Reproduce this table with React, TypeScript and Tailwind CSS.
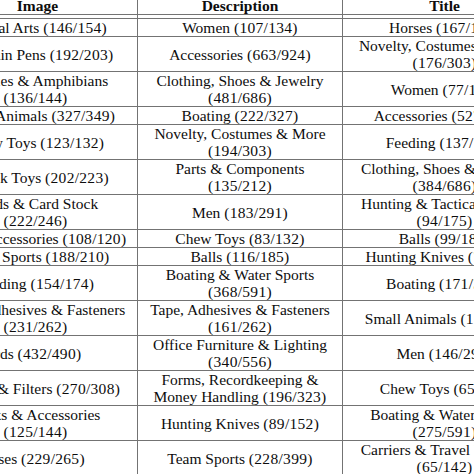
const rows: string[][] = [
  ["Martial Arts (146/154)", "Women (107/134)", "Horses (167/185)"],
  ["Fountain Pens (192/203)", "Accessories (663/924)", "Novelty, Costumes & More\n(176/303)"],
  ["Reptiles & Amphibians\n(136/144)", "Clothing, Shoes & Jewelry\n(481/686)", "Women (77/134)"],
  ["Small Animals (327/349)", "Boating (222/327)", "Accessories (527/924)"],
  ["Chew Toys (123/132)", "Novelty, Costumes & More\n(194/303)", "Feeding (137/174)"],
  ["Squeak Toys (202/223)", "Parts & Components\n(135/212)", "Clothing, Shoes & Jewelry\n(384/686)"],
  ["Cards & Card Stock\n(222/246)", "Men (183/291)", "Hunting & Tactical Knives\n(94/175)"],
  ["Horse Accessories (108/120)", "Chew Toys (83/132)", "Balls (99/185)"],
  ["Water Sports (188/210)", "Balls (116/185)", "Hunting Knives (78/152)"],
  ["Feeding (154/174)", "Boating & Water Sports\n(368/591)", "Boating (171/327)"],
  ["Tape, Adhesives & Fasteners\n(231/262)", "Tape, Adhesives & Fasteners\n(161/262)", "Small Animals (169/349)"],
  ["Cards (432/490)", "Office Furniture & Lighting\n(340/556)", "Men (146/291)"],
  ["Pumps & Filters (270/308)", "Forms, Recordkeeping &\nMoney Handling (196/323)", "Chew Toys (65/132)"],
  ["Tanks & Accessories\n(125/144)", "Hunting Knives (89/152)", "Boating & Water Sports\n(275/591)"],
  ["Horses (229/265)", "Team Sports (228/399)", "Carriers & Travel Products\n(65/142)"],
];

const pad = ["px-[8px]", "px-[8px]", "px-[8px]"];
// these two first-column cells sit a little left of the others in the source
const shifted = new Set([11, 14]);

// numbers in the source are set in math mode, a bit wider than the text face
function Line({ text }: { text: string }) {
  const parts = text.split(/(\(\d+\/\d+\))/);
  return (
    <div className="whitespace-nowrap">
      {parts.map((p, i) =>
        /^\(\d+\/\d+\)$/.test(p) ? (
          <span key={i} className="tracking-[0.3px]">{p}</span>
        ) : (
          <span key={i}>{p}</span>
        )
      )}
    </div>
  );
}

export default function App() {
  return (
    <div className="w-[474px] h-[474px] overflow-hidden bg-white text-[#0d0d0d] font-['Liberation_Serif',serif] text-[15.5px]">
      <div className="-ml-[66px] w-[613px]">
        {/* header */}
        <div className="grid grid-cols-[204px_205px_204px] h-[15px] border-b border-[#737373]">
          {["Image", "Description", "Title"].map((h, i) => (
            <div key={h} className={`border-r border-[#737373] text-center font-bold leading-[12px] ${i === 0 ? "pl-[10px] pr-[6px]" : pad[i]}`}>
              {h}
            </div>
          ))}
        </div>
        <div className="grid grid-cols-[204px_205px_204px] h-[4px] border-b border-[#737373]">
          <div className="border-r border-[#737373]" />
          <div className="border-r border-[#737373]" />
          <div className="border-r border-[#737373]" />
        </div>

        {rows.map((row, r) => (
          <div key={r} className="grid grid-cols-[204px_205px_204px] border-b border-[#737373]">
            {row.map((cell, c) => (
              <div
                key={c}
                className={`flex flex-col items-center justify-center text-center leading-[17px] border-r border-[#737373] ${
                  c === 0 && shifted.has(r) ? "pl-[10px] pr-[22px]" : pad[c]
                }`}
              >
                {cell.split("\n").map((l, k) => (
                  <Line key={k} text={l} />
                ))}
              </div>
            ))}
          </div>
        ))}
      </div>
    </div>
  );
}
